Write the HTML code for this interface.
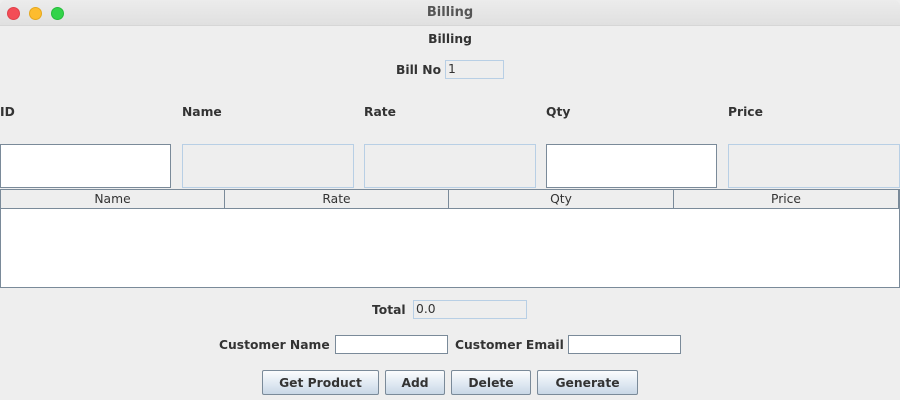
<!DOCTYPE html>
<html><head><meta charset="utf-8"><style>
*{margin:0;padding:0;box-sizing:border-box}
body{width:900px;height:400px;background:#eeeeee;position:relative;overflow:hidden;font-family:"DejaVu Sans","Liberation Sans",sans-serif;color:#333}
.a{position:absolute}
.tb{left:0;top:0;width:900px;height:26px;background:linear-gradient(#ececec,#e0e0e0);border-bottom:1px solid #d6d6d6;border-radius:6px 6px 0 0}
.dot{width:13px;height:13px;border-radius:50%;top:7px}
.b{font-weight:bold;font-size:12.3px;color:#333}
.ro{border:1px solid #b8cfe5;background:#eeeeee}
.ed{border:1px solid #7a8a99;background:#fff}
.txt{font-size:12.3px;color:#333;padding-left:2px;line-height:17px}
.th{top:189px;height:20px;border:1px solid #7a8a99;border-left:none;background:#eeeeee;font-size:12.3px;text-align:center;line-height:19px;color:#333}
.btn{top:370px;height:25px;border:1px solid #7a8a99;border-radius:2px;background:linear-gradient(#fbfcfd,#dde7f1 60%,#c9d7e6);font-weight:bold;font-size:12.3px;text-align:center;line-height:24px;color:#333}
</style></head><body>
<div class="a tb"></div>
<div class="a dot" style="left:7px;background:#f34c56;border:1px solid #e0414b"></div>
<div class="a dot" style="left:29px;background:#fdbc2e;border:1px solid #e5a81d"></div>
<div class="a dot" style="left:51px;background:#33d34a;border:1px solid #25bd3b"></div>
<div class="a" style="left:0;top:5px;width:900px;text-align:center;font-size:13px;color:#555;font-weight:bold">Billing</div>
<div class="a b" style="left:0;top:32px;width:900px;text-align:center">Billing</div>
<div class="a b" style="left:396px;top:63px">Bill No</div>
<div class="a ro txt" style="left:445px;top:60px;width:59px;height:19px">1</div>
<div class="a b" style="left:0;top:105px">ID</div>
<div class="a b" style="left:182px;top:105px">Name</div>
<div class="a b" style="left:364px;top:105px">Rate</div>
<div class="a b" style="left:546px;top:105px">Qty</div>
<div class="a b" style="left:728px;top:105px">Price</div>
<div class="a ed" style="left:0;top:144px;width:171px;height:44px"></div>
<div class="a ro" style="left:182px;top:144px;width:172px;height:44px"></div>
<div class="a ro" style="left:364px;top:144px;width:172px;height:44px"></div>
<div class="a ed" style="left:546px;top:144px;width:171px;height:44px"></div>
<div class="a ro" style="left:728px;top:144px;width:172px;height:44px"></div>
<div class="a" style="left:0;top:189px;width:900px;height:99px;background:#fff;border:1px solid #7a8a99"></div>
<div class="a th" style="left:1px;width:224px">Name</div>
<div class="a th" style="left:225px;width:224px">Rate</div>
<div class="a th" style="left:449px;width:225px">Qty</div>
<div class="a th" style="left:674px;width:225px">Price</div>
<div class="a b" style="left:372px;top:303px">Total</div>
<div class="a ro txt" style="left:413px;top:300px;width:114px;height:19px">0.0</div>
<div class="a b" style="left:219px;top:338px">Customer Name</div>
<div class="a ed" style="left:335px;top:335px;width:113px;height:19px"></div>
<div class="a b" style="left:455px;top:338px">Customer Email</div>
<div class="a ed" style="left:568px;top:335px;width:113px;height:19px"></div>
<div class="a btn" style="left:262px;width:117px">Get Product</div>
<div class="a btn" style="left:385px;width:60px">Add</div>
<div class="a btn" style="left:451px;width:80px">Delete</div>
<div class="a btn" style="left:537px;width:101px">Generate</div>
</body></html>
